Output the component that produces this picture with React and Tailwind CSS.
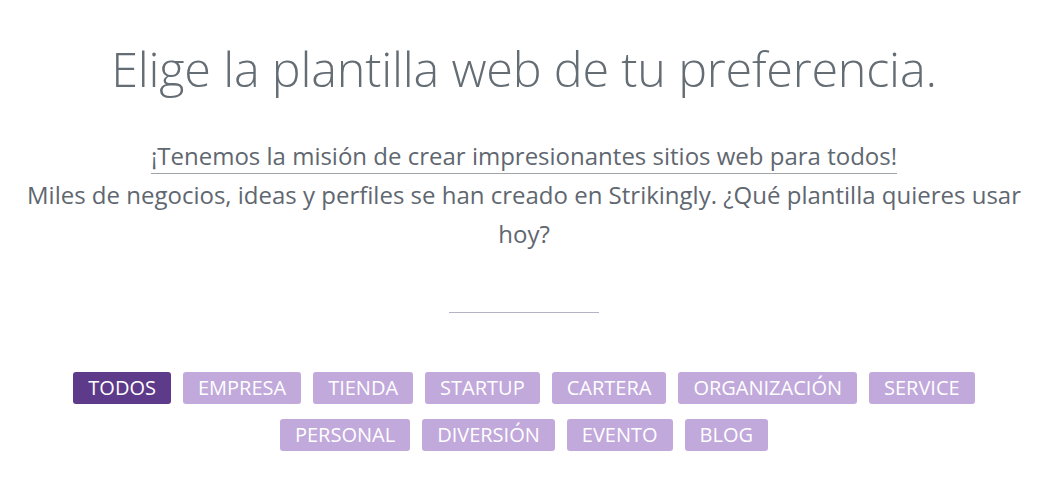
const categories = [
  'TODOS',
  'EMPRESA',
  'TIENDA',
  'STARTUP',
  'CARTERA',
  'ORGANIZACIÓN',
  'SERVICE',
  'PERSONAL',
  'DIVERSIÓN',
  'EVENTO',
  'BLOG',
];

export default function App() {
  const active = 'TODOS';

  return (
    <div className="min-h-screen bg-white font-['Open_Sans',sans-serif] text-[#5f6770]">
      <section className="mx-auto flex w-[1044px] flex-col items-center pl-[24px] pr-[20px] pt-[38px] text-center">
        <h1 className="text-[48.5px] font-light leading-[60px] tracking-[-0.2px] text-[#646c74]">
          Elige la plantilla web de tu preferencia.
        </h1>

        <p className="mt-[38px] text-[24px] leading-[39px]">
          <span className="border-b border-[#9ea4aa] pb-[1px]">
            ¡Tenemos la misión de crear impresionantes sitios web para todos!
          </span>
          <br />
          Miles de negocios, ideas y perfiles se han creado en Strikingly. ¿Qué plantilla quieres usar hoy?
        </p>

        <div className="mt-[59px] h-px w-[150px] bg-[#b7b1c4]" />

        <div className="mt-[59px] flex w-[940px] flex-wrap justify-center gap-x-3 gap-y-[15px]">
          {categories.map((cat) => (
            <button
              key={cat}
              className={`h-8 rounded-[3px] px-[15px] text-[20px] leading-8 text-white ${
                cat === active ? 'bg-[#5e3a8a]' : 'bg-[#c1a9db]'
              }`}
            >
              {cat}
            </button>
          ))}
        </div>
      </section>
    </div>
  );
}
